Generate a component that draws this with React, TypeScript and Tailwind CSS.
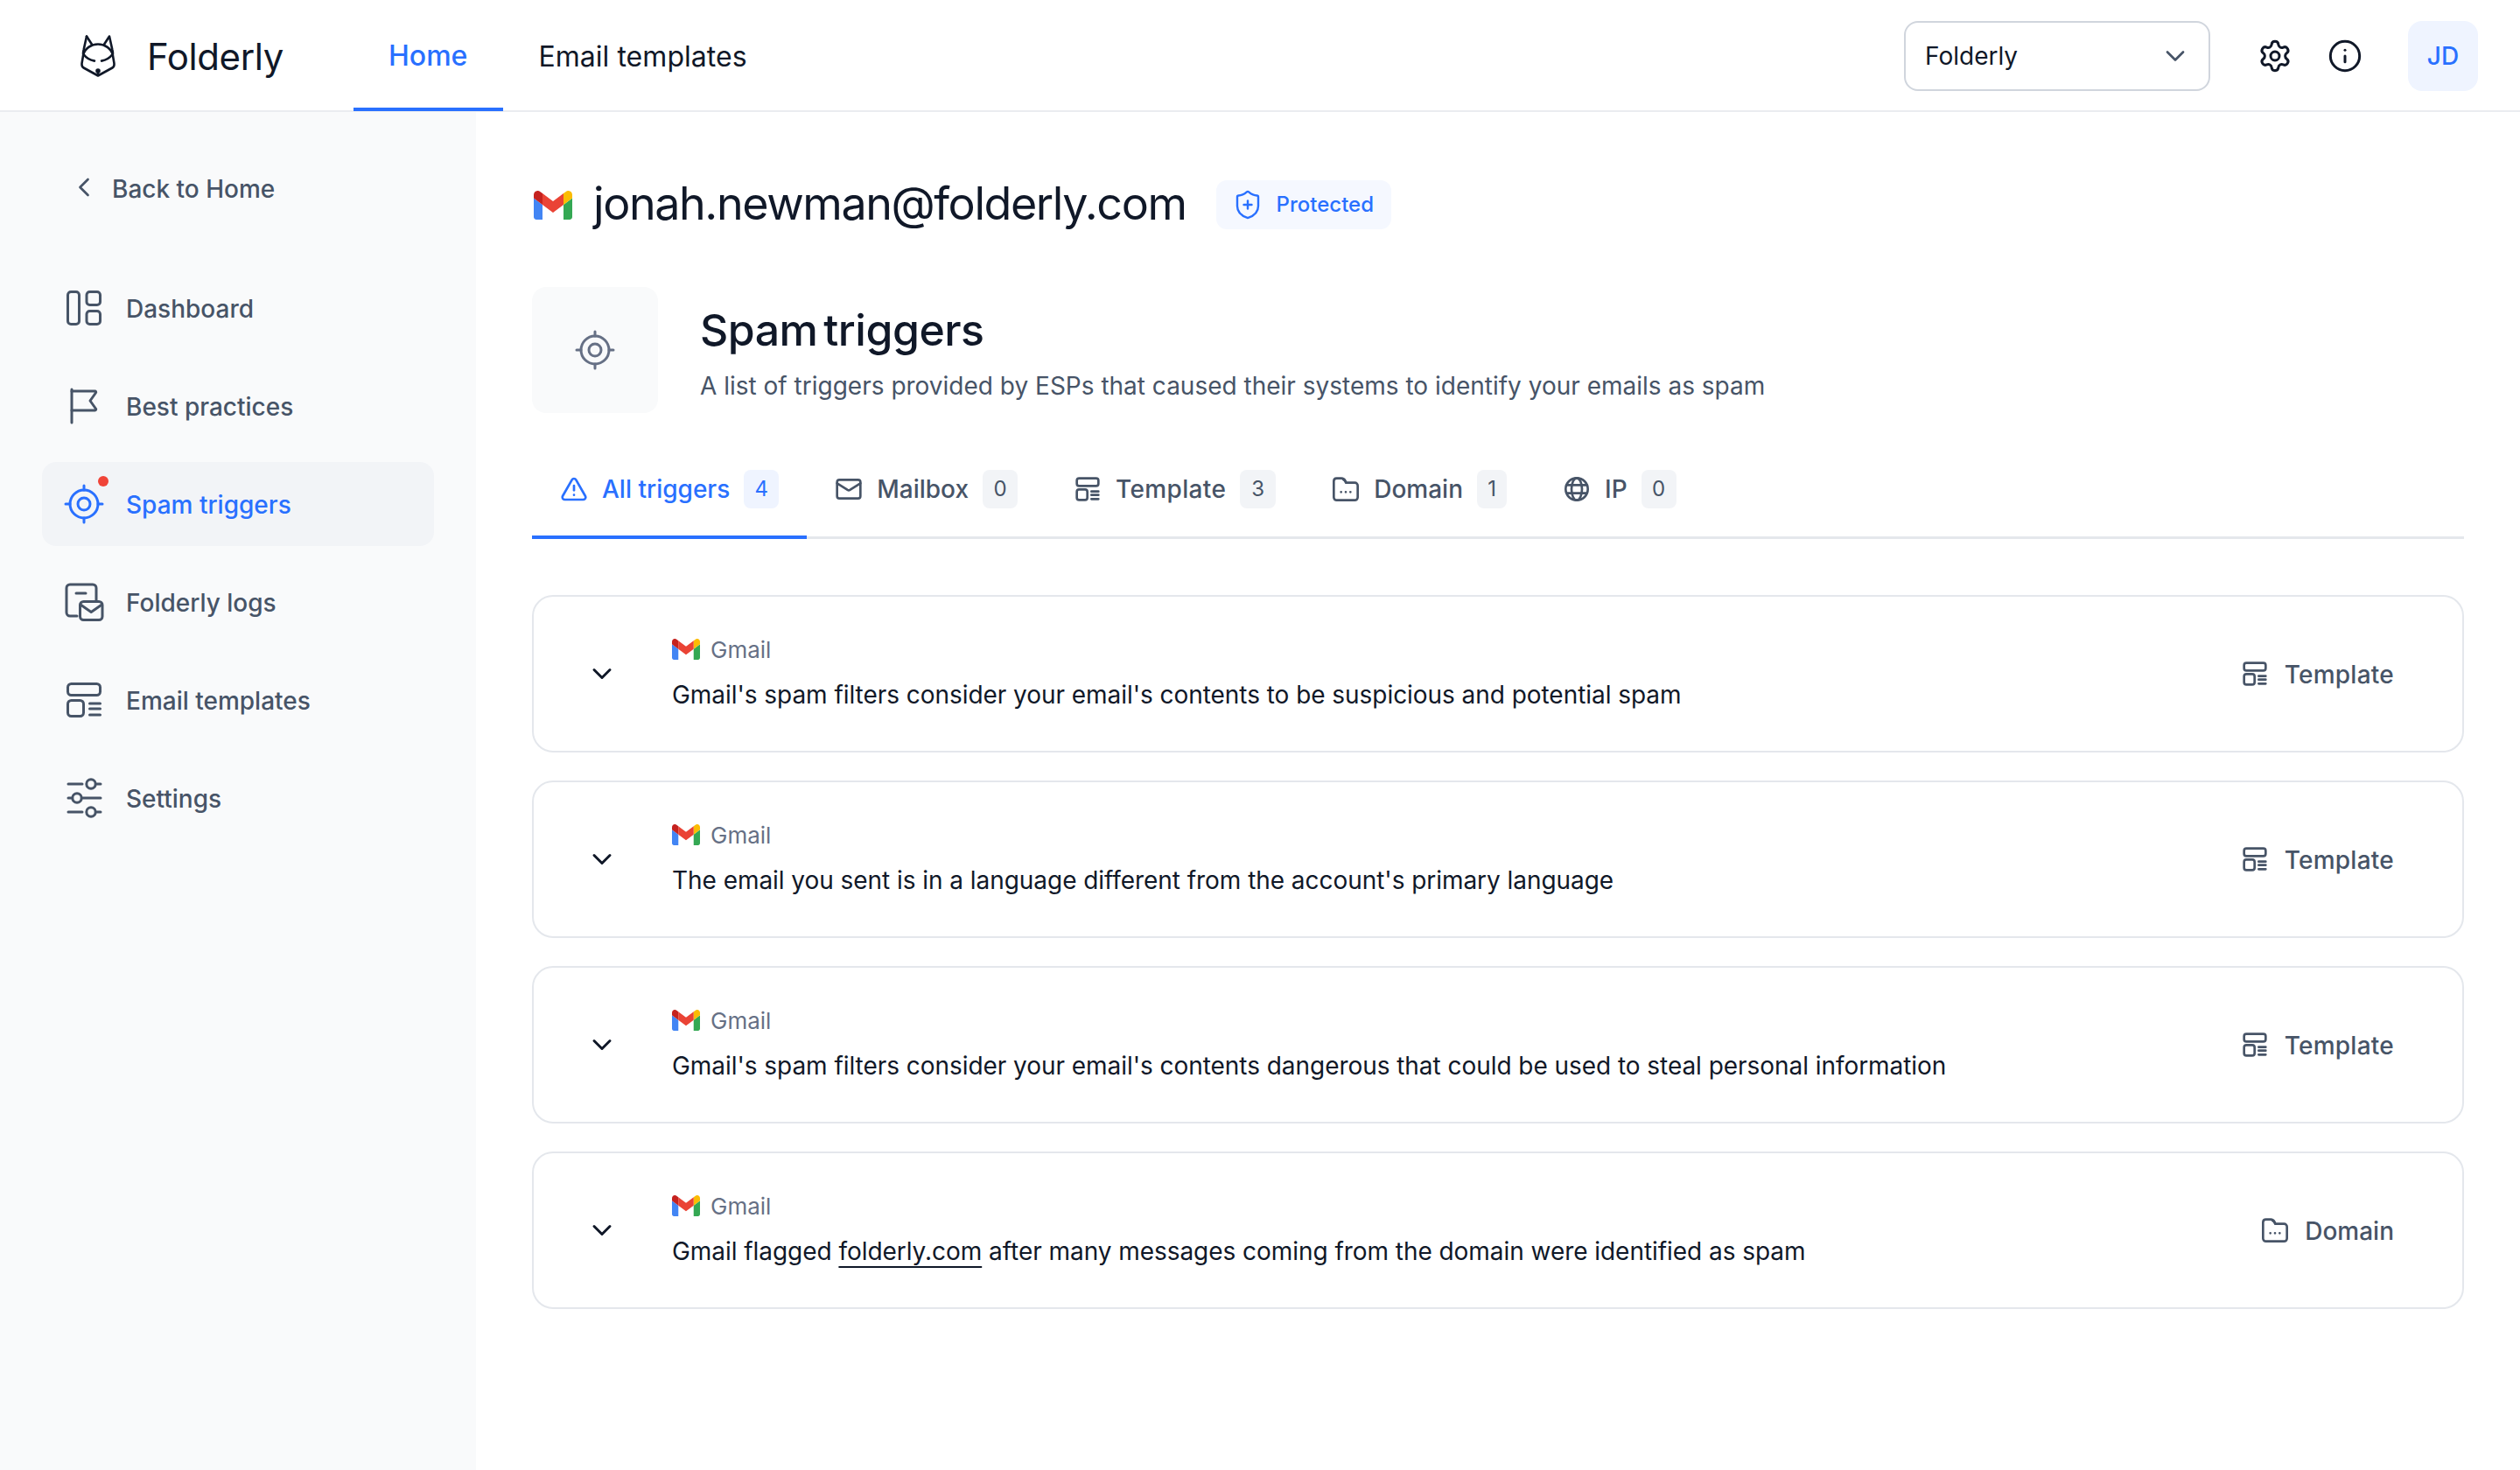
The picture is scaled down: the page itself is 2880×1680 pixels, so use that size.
import { ChevronDown, ChevronLeft, Info, Mail, Settings, ShieldPlus, TriangleAlert } from "lucide-react";
import type { ReactNode } from "react";

// ── Drawn icons ────────────────────────────────
function GmailIcon({ className }: { className: string }) {
  return (
    <svg className={className} viewBox="52 42 88 66">
      <path fill="#4285f4" d="M58 108h14V74L52 59v43c0 3.32 2.69 6 6 6" />
      <path fill="#34a853" d="M120 108h14c3.32 0 6-2.69 6-6V59l-20 15" />
      <path fill="#fbbc04" d="M120 48v26l20-15v-8c0-7.42-8.47-11.65-14.4-7.2" />
      <path fill="#ea4335" d="M72 74V48l24 18 24-18v26L96 92" />
      <path fill="#c5221f" d="M52 51v8l20 15V48l-5.6-4.2c-5.94-4.45-14.4-.22-14.4 7.2" />
    </svg>
  );
}

function Logo() {
  return (
    <svg className="h-[48px] w-[40px] text-[#101828]" viewBox="0 0 40 48" fill="none" stroke="currentColor" strokeWidth={2.6} strokeLinecap="round" strokeLinejoin="round">
      <path d="M7 1.500 3.600 17c-.5 2-.8 3.500-.4 5.500L1.600 32c-.3 2 .2 4.500 2 5.500L20 46.500l16.400-9c1.800-1 2.300-3.500 2-5.500l-1.600-9.500c.4-2 .1-3.500-.4-5.500L33 1.500 26.500 11.500" />
      <path d="M7 1.500 13.500 11.500" />
      <path d="M3.200 22.500C5 15.500 12 10.500 20 10.500s15 5 16.800 12" />
      <path d="M3.400 22c3 4 7.600 6.800 12.600 7.600M36.600 22c-3 4-7.600 6.800-12.600 7.600" />
      <path d="M20 41v4" />
      <circle cx="20" cy="41" r="1.500" fill="currentColor" />
    </svg>
  );
}

function SvgIcon({ className, children }: { className: string; children: ReactNode }) {
  return (
    <svg className={className} viewBox="0 0 24 24" fill="none" stroke="currentColor" strokeWidth={1.5} strokeLinecap="round" strokeLinejoin="round">
      {children}
    </svg>
  );
}

function DashboardIcon({ className }: { className: string }) {
  return (
    <SvgIcon className={className}>
      <rect x="2.750" y="2.750" width="6.500" height="18.500" rx="1.800" />
      <rect x="13.500" y="2.750" width="7.750" height="7.500" rx="1.800" />
      <rect x="13.500" y="13.750" width="7.750" height="7.500" rx="1.800" />
    </SvgIcon>
  );
}

function FlagIcon({ className }: { className: string }) {
  return (
    <SvgIcon className={className}>
      <path d="M5 2.500v19" />
      <path d="M5 3.500h13.200a.6.6 0 0 1 .5 1L15.500 9l3.200 4.500a.6.6 0 0 1-.5 1H5" />
    </SvgIcon>
  );
}

function TargetIcon({ className }: { className: string }) {
  return (
    <SvgIcon className={className}>
      <circle cx="12" cy="12" r="8" />
      <circle cx="12" cy="12" r="3.500" />
      <path d="M12 1.500V4M12 20v2.500M1.500 12H4M20 12h2.500" />
    </SvgIcon>
  );
}

function LogsIcon({ className }: { className: string }) {
  return (
    <SvgIcon className={className}>
      <path d="M8 20H4a2 2 0 0 1-2-2V4a2 2 0 0 1 2-2h13a2 2 0 0 1 2 2v7" />
      <path d="M7.500 7h5.500" />
      <rect x="9.750" y="11.750" width="12.750" height="10.500" rx="2" />
      <path d="m10 13.500 6.100 4.200 6.100-4.200" />
    </SvgIcon>
  );
}

function TemplateIcon({ className }: { className: string }) {
  return (
    <SvgIcon className={className}>
      <rect x="2.750" y="2.750" width="18.500" height="6.500" rx="2" />
      <rect x="2.750" y="12.250" width="9" height="9" rx="2" />
      <path d="M15.250 14h6M15.250 17h6M15.250 20.500h6" />
    </SvgIcon>
  );
}

function SlidersIcon({ className }: { className: string }) {
  return (
    <SvgIcon className={className}>
      <path d="M3 4h8M19 4h2.500M3 12h2M11 12h10.500M3 20h8M19 20h2.500" />
      <circle cx="16" cy="4" r="2.600" />
      <circle cx="8" cy="12" r="2.600" />
      <circle cx="16" cy="20" r="2.600" />
    </SvgIcon>
  );
}

function FolderIcon({ className }: { className: string }) {
  return (
    <SvgIcon className={className}>
      <path d="M1.750 5A2.500 2.500 0 0 1 4.250 2.750h4c1.500 0 2.700.8 3.300 2.200l.7 1.550h7.500a2.500 2.500 0 0 1 2.500 2.500v10a2.500 2.500 0 0 1-2.500 2.500H4.250a2.500 2.500 0 0 1-2.500-2.500z" />
      <path d="M12.250 6.500c-.5-1.500-1.200-2.300-2.300-2.800" />
      <path d="M8 14.500h.01M12 14.500h.01M16 14.500h.01" />
    </SvgIcon>
  );
}

function GlobeIcon({ className }: { className: string }) {
  return (
    <SvgIcon className={className}>
      <circle cx="12" cy="12" r="9.500" />
      <ellipse cx="12" cy="12" rx="4.500" ry="9.500" />
      <path d="M3.500 8.500h17M3.500 15.500h17" />
    </SvgIcon>
  );
}

// ── Data ───────────────────────────────────────
const navItems = [
  { label: "Dashboard", icon: DashboardIcon },
  { label: "Best practices", icon: FlagIcon },
  { label: "Spam triggers", icon: TargetIcon, active: true },
  { label: "Folderly logs", icon: LogsIcon },
  { label: "Email templates", icon: TemplateIcon },
  { label: "Settings", icon: SlidersIcon },
];

const tabs = [
  { label: "All triggers", count: 4, icon: TriangleAlert, active: true },
  { label: "Mailbox", count: 0, icon: Mail },
  { label: "Template", count: 3, icon: TemplateIcon },
  { label: "Domain", count: 1, icon: FolderIcon },
  { label: "IP", count: 0, icon: GlobeIcon },
];

const triggers: { text: ReactNode; type: string; icon: typeof TemplateIcon }[] = [
  { text: "Gmail's spam filters consider your email's contents to be suspicious and potential spam", type: "Template", icon: TemplateIcon },
  { text: "The email you sent is in a language different from the account's primary language", type: "Template", icon: TemplateIcon },
  { text: "Gmail's spam filters consider your email's contents dangerous that could be used to steal personal information", type: "Template", icon: TemplateIcon },
  {
    text: (
      <>
        Gmail flagged <span className="underline decoration-2 underline-offset-[7px]">folderly.com</span> after many messages coming from the domain were identified as spam
      </>
    ),
    type: "Domain",
    icon: FolderIcon,
  },
];

// ── Page ───────────────────────────────────────
function Header() {
  return (
    <header className="flex h-[128px] shrink-0 items-center border-b-2 border-[#EAECF0] bg-white pl-[92px] pr-[48px] pt-[2px]">
      <Logo />
      <span className="ml-[36px] w-[154px] text-[42px] font-normal tracking-[-0.4px] text-[#101828] [font-variation-settings:'opsz'_32]">Folderly</span>
      <nav className="-mt-[2px] ml-[82px] flex h-[128px]">
        <a className="flex items-center border-b-[4px] border-[#2970FF] pl-[40px] pr-[41px] pt-[6px] text-[32px] font-medium text-[#2970FF]">Home</a>
        <a className="flex items-center px-[40px] pt-[3px] text-[32px] tracking-[0.05px] text-[#101828]">Email templates</a>
      </nav>
      <div className="ml-auto flex h-[80px] w-[350px] items-center justify-between rounded-[16px] border-2 border-[#D0D5DD] pl-[22px] pr-[20px] text-[28px] text-[#101828]">
        Folderly
        <ChevronDown className="h-[36px] w-[36px] text-[#475467]" strokeWidth={1.8} />
      </div>
      <Settings className="ml-[54px] h-[40px] w-[40px] text-[#101828]" strokeWidth={1.8} />
      <Info className="ml-[40px] h-[40px] w-[40px] text-[#101828]" strokeWidth={1.8} />
      <div className="ml-[52px] flex h-[80px] w-[80px] items-center justify-center rounded-[16px] bg-[#EFF4FF] text-[28px] font-medium text-[#2970FF]">JD</div>
    </header>
  );
}

function Sidebar() {
  return (
    <aside className="flex w-[544px] shrink-0 flex-col bg-[#F9FAFB] px-[48px]">
      <div className="mt-[66px] flex h-[40px] items-center text-[28px] font-medium text-[#475467]">
        <ChevronLeft className="ml-[30px] h-[36px] w-[36px]" strokeWidth={1.8} />
        <span className="ml-[14px] pt-[3px]">Back to Home</span>
      </div>
      <nav className="mt-[70px] flex flex-col gap-[16px]">
        {navItems.map((item) => (
          <div
            key={item.label}
            className={`flex h-[96px] items-center gap-[24px] rounded-[16px] pl-[24px] text-[28px] font-medium ${
              item.active ? "bg-[#F2F4F7] text-[#2970FF]" : "text-[#475467]"
            }`}
          >
            <div className="relative">
              <item.icon className="h-[48px] w-[48px]" />
              {item.active && <span className="absolute right-[-4px] top-[-8px] h-[12px] w-[12px] rounded-full bg-[#F04438]" />}
            </div>
            <span className="pt-[2px]">{item.label}</span>
          </div>
        ))}
      </nav>
    </aside>
  );
}

function TriggerCard({ text, type, icon: Icon }: (typeof triggers)[number]) {
  return (
    <div className="flex h-[180px] items-center rounded-[24px] border-2 border-[#E4E7EC] pl-[60px] pr-[78px]">
      <ChevronDown className="h-[36px] w-[36px] text-[#101828]" strokeWidth={2} />
      <div className="ml-[62px] flex flex-col pb-[4px]">
        <div className="flex items-center gap-[12px] text-[26px] text-[#667085]">
          <GmailIcon className="h-[24px] w-[32px]" />
          Gmail
        </div>
        <p className="mt-[12px] text-[28px] leading-[40px] tracking-[-0.05px] text-[#101828]">{text}</p>
      </div>
      <div className="ml-auto flex items-center gap-[18px] text-[28px] font-medium text-[#475467]">
        <Icon className="h-[32px] w-[32px] [stroke-width:2]" />
        <span className={`pt-[2px] ${type === "Template" ? "tracking-[0.25px]" : ""}`}>{type}</span>
      </div>
    </div>
  );
}

export default function App() {
  return (
    <div className="flex h-[1680px] w-[2880px] flex-col overflow-hidden bg-white font-['Inter',sans-serif]">
      <Header />
      <div className="flex min-h-0 flex-1">
        <Sidebar />
        <main className="flex-1 pl-[64px] pr-[64px]">
          {/* Mailbox */}
          <div className="mt-[78px] flex h-[56px] items-center">
            <GmailIcon className="ml-[2px] h-[33px] w-[44px]" />
            <h1 className="ml-[24px] pb-[3px] text-[52px] font-normal tracking-[-1.42px] text-[#101828] [font-variation-settings:'opsz'_32]">jonah.newman@folderly.com</h1>
            <div className="ml-[34px] flex h-[56px] items-center gap-[15px] rounded-[12px] bg-[#F5F8FF] pl-[18px] pr-[20px] text-[24px] font-medium text-[#2970FF]">
              <ShieldPlus className="h-[36px] w-[36px]" strokeWidth={1.6} />
              Protected
            </div>
          </div>

          {/* Section title */}
          <div className="mt-[66px] flex items-start gap-[48px]">
            <div className="flex h-[144px] w-[144px] items-center justify-center rounded-[16px] bg-[#F9FAFB]">
              <TargetIcon className="h-[48px] w-[48px] text-[#667085]" />
            </div>
            <div className="pt-[17px]">
              <h2 className="text-[50px] font-[450] leading-[64px] tracking-[-0.5px] text-[#101828] [word-spacing:-6px] [font-variation-settings:'opsz'_32]">Spam triggers</h2>
              <p className="mt-[12px] text-[28px] leading-[40px] text-[#475467]">
                A list of triggers provided by ESPs that caused their systems to identify your emails as spam
              </p>
            </div>
          </div>

          {/* Tabs */}
          <div className="mt-[40px] flex h-[104px] border-b-[3px] border-[#E4E7EC]">
            {tabs.map((tab) => (
              <div
                key={tab.label}
                className={`-mb-[3px] flex items-center gap-[16px] border-b-[4px] px-[32px] pb-[6px] text-[28px] font-medium ${
                  tab.active ? "border-[#2970FF] text-[#2970FF]" : "border-transparent text-[#475467]"
                }`}
              >
                <tab.icon className="h-[32px] w-[32px] [stroke-width:2]" />
                <span className={tab.label === "Template" ? "tracking-[0.35px]" : ""}>{tab.label}</span>
                <span className={`flex h-[44px] items-center justify-center rounded-[8px] text-[24px] font-normal ${tab.active ? "bg-[#EFF4FF]" : "bg-[#F2F4F7]"} ${tab.count === 1 ? "w-[34px]" : tab.count === 3 ? "w-[41px]" : "w-[40px]"}`}>
                  {tab.count}
                </span>
              </div>
            ))}
          </div>

          {/* Trigger list */}
          <div className="mt-[64px] flex flex-col gap-[32px]">
            {triggers.map((t, i) => (
              <TriggerCard key={i} {...t} />
            ))}
          </div>
        </main>
      </div>
    </div>
  );
}
